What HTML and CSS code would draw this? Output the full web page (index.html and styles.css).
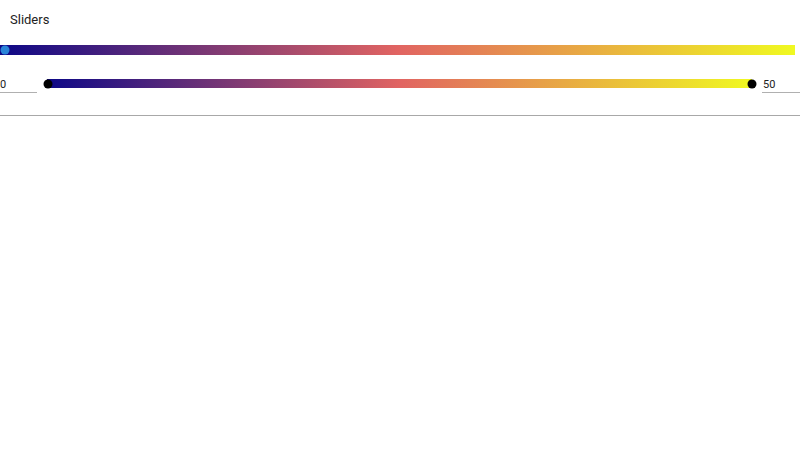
FILE: index.html
```html
<!DOCTYPE html>
<html>
<head>
<meta charset="utf-8">
<link rel="stylesheet" href="styles.css">
</head>
<body>
<div class="panel">
  <div class="title">Sliders</div>
  <div class="slider-row single">
    <div class="track">
      <span class="thumb blue"></span>
    </div>
  </div>
  <div class="range-row">
    <div class="num left">0</div>
    <div class="track range">
      <span class="thumb black start"></span>
      <span class="thumb black end"></span>
    </div>
    <div class="num right">50</div>
  </div>
</div>
</body>
</html>
```

FILE: styles.css
```css
html, body {
  margin: 0;
  padding: 0;
  background: #ffffff;
  font-family: Roboto, "Liberation Sans", sans-serif;
  color: #222;
}
.panel {
  width: 800px;
  border-bottom: 1px solid #a8a8a8;
  padding-bottom: 22px;
}
.title {
  padding: 12px 0 0 10px;
  font-size: 13px;
  line-height: 16px;
  height: 33px;
  box-sizing: border-box;
  color: #222;
}
.slider-row.single {
  padding: 12px 5px 0 0;
  height: 22px;
  box-sizing: border-box;
}
.track {
  position: relative;
  height: 10px;
  background: linear-gradient(to right, #0d0887 0%, #e16462 50%, #f0f921 100%);
}
.thumb {
  position: absolute;
  top: 50%;
  width: 9px;
  height: 9px;
  border-radius: 50%;
  transform: translate(-50%, -50%);
}
.thumb.blue {
  left: 5px;
  background: #2a84d8;
}
.thumb.black {
  background: #000;
}
.thumb.start { left: 1px; }
.thumb.end { left: 100%; }
.range-row {
  display: flex;
  align-items: flex-start;
  margin-top: 23px;
  height: 15px;
}
.range-row .track {
  flex: 1;
  margin: 1px 10px 0 10px;
  height: 9px;
}
.num {
  width: 37px;
  font-size: 11px;
  line-height: 13px;
  border-bottom: 1px solid #b0b0b0;
  height: 15px;
  box-sizing: border-box;
  padding-top: 0;
  color: #222;
}
.num.right { width: 38px; padding-left: 1px; }
```
